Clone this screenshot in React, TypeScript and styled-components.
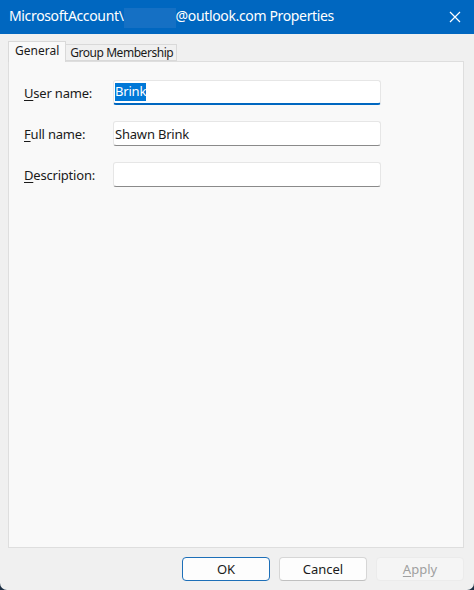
import React from "react";
import styled, { createGlobalStyle } from "styled-components";

const Global = createGlobalStyle`
  html, body { margin: 0; padding: 0; background: #1c2f44; }
  body { font-family: "Noto Sans", "Open Sans", sans-serif; }
`;

const Window = styled.div`
  width: 474px;
  height: 590px;
  display: flex;
  flex-direction: column;
  background: #f0f0f0;
  border-radius: 0 0 7px 7px;
  overflow: hidden;
  box-sizing: border-box;
`;

const TitleBar = styled.div`
  height: 34px;
  flex: none;
  background: #0067c0;
  color: #ffffff;
  display: flex;
  align-items: center;
  padding-left: 9px;
  font-size: 14px;
  letter-spacing: -0.35px;
`;

const TitleText = styled.div`
  flex: 1;
  white-space: pre;
`;

const Redact = styled.span`
  display: inline-block;
  width: 52px;
  height: 20px;
  vertical-align: middle;
  background: #1570c4;
`;

const CloseBtn = styled.div`
  width: 38px;
  height: 34px;
  display: flex;
  align-items: center;
  justify-content: center;
`;

const Body = styled.div`
  flex: 1;
  display: flex;
  flex-direction: column;
  padding: 7px 10px 0 8px;
  min-height: 0;
`;

const TabStrip = styled.div`
  display: flex;
  align-items: flex-end;
  height: 20px;
  position: relative;
  z-index: 1;
`;

const Tab = styled.div<{ $active?: boolean }>`
  box-sizing: border-box;
  font-size: 12px;
  letter-spacing: ${(p) => (p.$active ? "0" : "-0.45px")};
  color: #1a1a1a;
  border: 1px solid #d9d9d9;
  border-bottom: ${(p) => (p.$active ? "none" : "1px solid #d9d9d9")};
  background: ${(p) => (p.$active ? "#f9f9f9" : "#f0f0f0")};
  height: ${(p) => (p.$active ? "21px" : "17px")};
  margin-bottom: ${(p) => (p.$active ? "-1px" : "0")};
  padding: ${(p) => (p.$active ? "1px 6px 0 6px" : "0 3px 0 4px")};
  margin-left: ${(p) => (p.$active ? "0" : "-1px")};
  line-height: 16px;
  white-space: nowrap;
`;

const Panel = styled.div`
  flex: 1;
  background: #f9f9f9;
  border: 1px solid #dedede;
  padding: 18px 0 0 15px;
  display: flex;
  flex-direction: column;
  gap: 16px;
`;

const Row = styled.div`
  display: grid;
  grid-template-columns: 89px 268px;
  align-items: center;
`;

const Label = styled.div`
  font-size: 13px;
  letter-spacing: -0.2px;
  color: #1a1a1a;
`;

const U = styled.span`
  text-decoration: underline;
  text-underline-offset: 2px;
  text-decoration-thickness: 1px;
`;

const Field = styled.div<{ $focused?: boolean }>`
  box-sizing: border-box;
  height: 25px;
  background: #ffffff;
  border: 1px solid #e6e6e6;
  border-bottom: ${(p) => (p.$focused ? "2px solid #0067c0" : "1px solid #8a8a8a")};
  border-radius: 3px;
  font-size: 13px;
  letter-spacing: -0.2px;
  color: #1a1a1a;
  display: flex;
  align-items: center;
  padding-left: 1px;
`;

const Selected = styled.span`
  background: #0078d7;
  color: #ffffff;
  padding: 0 0 1px 0;
  line-height: 17px;
`;

const Footer = styled.div`
  flex: none;
  height: 42px;
  display: flex;
  align-items: center;
  justify-content: flex-end;
  gap: 9px;
`;

const Button = styled.div<{ $primary?: boolean; $disabled?: boolean }>`
  box-sizing: border-box;
  width: 88px;
  height: 24px;
  border-radius: 4px;
  display: flex;
  align-items: center;
  justify-content: center;
  font-size: 13px;
  color: ${(p) => (p.$disabled ? "#a0a0a0" : "#1a1a1a")};
  background: ${(p) => (p.$disabled ? "#f5f5f5" : "#fdfdfd")};
  border: 1px solid
    ${(p) => (p.$primary ? "#1d6fb8" : p.$disabled ? "#ebebeb" : "#d6d6d6")};
  border-bottom-color: ${(p) =>
    p.$primary ? "#1d6fb8" : p.$disabled ? "#ebebeb" : "#c0c0c0"};
`;

export default function App() {
  return (
    <>
      <Global />
      <Window>
        <TitleBar>
          <TitleText>
            MicrosoftAccount\<Redact />@outlook.com Properties
          </TitleText>
          <CloseBtn>
            <svg width="12" height="12" viewBox="0 0 12 12">
              <path d="M1 1 L11 11 M11 1 L1 11" stroke="#ffffff" strokeWidth="1.2" />
            </svg>
          </CloseBtn>
        </TitleBar>
        <Body>
          <TabStrip>
            <Tab $active>General</Tab>
            <Tab>Group Membership</Tab>
          </TabStrip>
          <Panel>
            <Row>
              <Label>
                <U>U</U>ser name:
              </Label>
              <Field $focused>
                <Selected>Brink</Selected>
              </Field>
            </Row>
            <Row>
              <Label>
                <U>F</U>ull name:
              </Label>
              <Field>Shawn Brink</Field>
            </Row>
            <Row>
              <Label>
                <U>D</U>escription:
              </Label>
              <Field />
            </Row>
          </Panel>
          <Footer>
            <Button $primary>OK</Button>
            <Button>Cancel</Button>
            <Button $disabled>
              <span>
                <U>A</U>pply
              </span>
            </Button>
          </Footer>
        </Body>
      </Window>
    </>
  );
}
